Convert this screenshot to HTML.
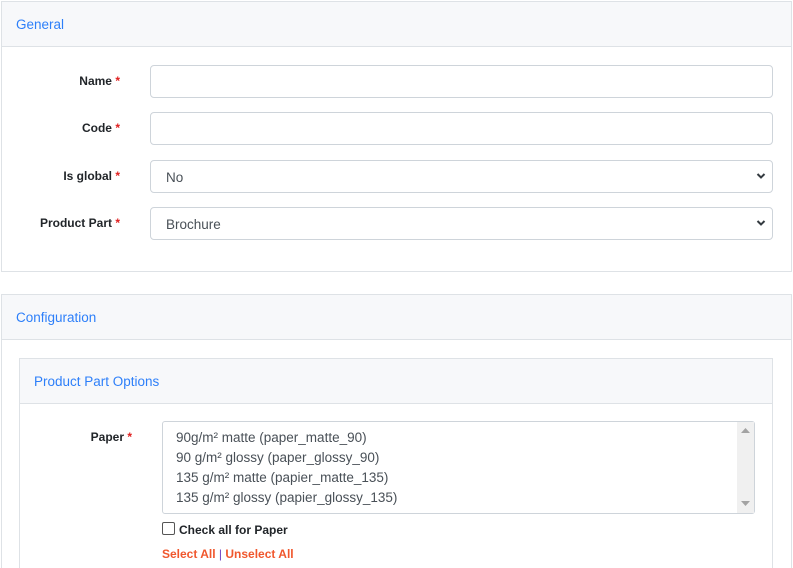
<!DOCTYPE html>
<html><head><meta charset="utf-8"><style>
*{box-sizing:border-box;margin:0;padding:0}
html,body{width:793px;height:568px;overflow:hidden}
body{background:#fff;font-family:"Liberation Sans",Arial,sans-serif;font-size:13px;color:#212529;position:relative}
.abs{position:absolute}
.card{position:absolute;border:1px solid #dee2e6;background:#fff}
.hdr{position:absolute;left:0;right:0;top:0;background:#f7f8fa;border-bottom:1px solid #dee2e6;color:#2d7ff9;font-size:13.5px;padding-left:14px}
.lbl{position:absolute;font-weight:bold;font-size:12px;text-align:right;width:120px}
.lbl span{color:#e02020}
.inp{position:absolute;left:150px;width:623px;height:33px;border:1px solid #ced4da;border-radius:4px;background:#fff;font-size:13.5px;color:#495057;padding:8px 15px}
.chev{position:absolute;right:6px;top:11px}
</style></head><body>
<div class="card" style="left:1px;top:1px;width:791px;height:271px">
 <div class="hdr" style="height:45px;line-height:46px">General</div>
</div>
<div class="lbl" style="left:0;top:74px">Name <span>*</span></div>
<div class="inp" style="top:65px"></div>
<div class="lbl" style="left:0;top:121px">Code <span>*</span></div>
<div class="inp" style="top:112px"></div>
<div class="lbl" style="left:0;top:169px">Is global <span>*</span></div>
<div class="inp" style="top:160px;padding-top:9px">No<svg class="chev" width="10" height="8" viewBox="0 0 10 8"><path d="M1.5 2 L5 5.5 L8.5 2" stroke="#343a40" stroke-width="2" fill="none"/></svg></div>
<div class="lbl" style="left:0;top:216px">Product Part <span>*</span></div>
<div class="inp" style="top:207px;padding-top:9px">Brochure<svg class="chev" width="10" height="8" viewBox="0 0 10 8"><path d="M1.5 2 L5 5.5 L8.5 2" stroke="#343a40" stroke-width="2" fill="none"/></svg></div>

<div class="card" style="left:1px;top:294px;width:791px;height:274px;border-bottom:none">
 <div class="hdr" style="height:45px;line-height:46px">Configuration</div>
</div>
<div class="card" style="left:19px;top:358px;width:754px;height:210px;border-bottom:none">
 <div class="hdr" style="height:45px;line-height:46px">Product Part Options</div>
</div>
<div class="lbl" style="left:12px;top:430px">Paper <span>*</span></div>
<div class="abs" style="left:162px;top:421px;width:593px;height:93px;border:1px solid #ced4da;border-radius:3px;font-size:13.5px;color:#495057;line-height:20px;padding:6px 13px 5px">
 90g/m² matte (paper_matte_90)<br>90 g/m² glossy (paper_glossy_90)<br>135 g/m² matte (papier_matte_135)<br>135 g/m² glossy (papier_glossy_135)
 <div class="abs" style="right:0;top:0;width:17px;height:91px;background:#f0f0f0">
  <svg class="abs" style="left:4px;top:6px" width="9" height="6"><path d="M0 5 L4.5 0 L9 5Z" fill="#a3a3a3"/></svg>
  <svg class="abs" style="left:4px;top:79px" width="9" height="6"><path d="M0 0 L4.5 5 L9 0Z" fill="#a3a3a3"/></svg>
 </div>
</div>
<div class="abs" style="left:162px;top:522px;width:13px;height:13px;border:1px solid #555;border-radius:2px"></div>
<div class="abs" style="left:179px;top:523px;font-weight:bold;font-size:12px">Check all for Paper</div>
<div class="abs" style="left:162px;top:547px;font-weight:bold;font-size:12px;color:#f0572d">Select All <span style="color:#6f42c1;font-weight:normal">|</span> Unselect All</div>
</body></html>
